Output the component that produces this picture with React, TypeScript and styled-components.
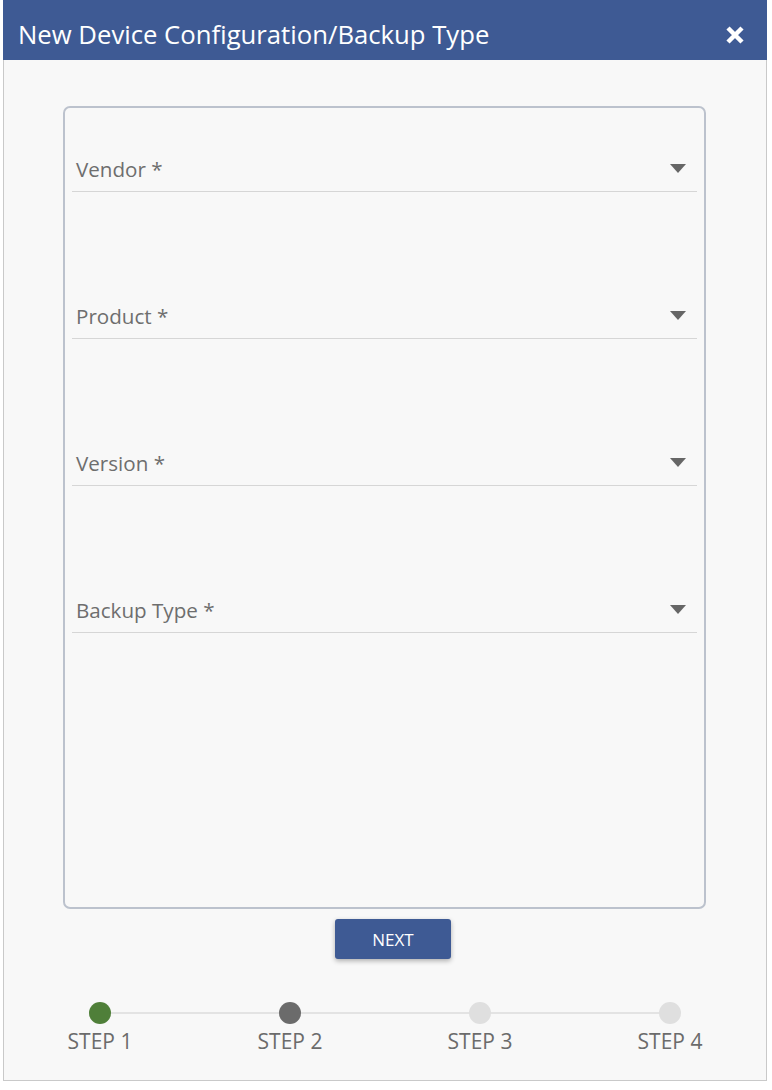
import React from 'react';
import styled, { createGlobalStyle } from 'styled-components';

const GlobalStyle = createGlobalStyle`
  body {
    margin: 0;
    background: #ffffff;
    font-family: 'Open Sans', 'Noto Sans', sans-serif;
  }
`;

const Page = styled.div`
  padding-left: 3px;
`;

const Dialog = styled.div`
  width: 764px;
  box-sizing: border-box;
  background: #f8f8f8;
  border: 1px solid #c9c9c9;
  border-top: none;
  display: flex;
  flex-direction: column;
`;

const Header = styled.header`
  height: 60px;
  box-sizing: border-box;
  margin: 0 -1px;
  padding: 9px 21px 0 15px;
  background: #3e5a94;
  display: flex;
  align-items: center;
  justify-content: space-between;
`;

const Title = styled.h1`
  margin: 0;
  font-size: 25.7px;
  font-weight: 400;
  line-height: 30px;
  color: #ffffff;
`;

const CloseButton = styled.button`
  border: none;
  background: none;
  padding: 0;
  width: 22px;
  height: 22px;
  display: flex;
  cursor: pointer;
`;

const Body = styled.div`
  padding: 46px 60px 0 59px;
  display: flex;
  flex-direction: column;
`;

const Card = styled.div`
  height: 803px;
  box-sizing: border-box;
  border: 2px solid #bcc2cd;
  border-radius: 7px;
  padding: 49px 7px 0;
  display: flex;
  flex-direction: column;
  gap: 112px;
`;

const Field = styled.div`
  display: flex;
  align-items: center;
  justify-content: space-between;
  padding: 0 11px 10px 4px;
  border-bottom: 1px solid #d6d6d6;
  cursor: pointer;
`;

const Label = styled.span`
  font-size: 20.6px;
  line-height: 24px;
  color: #6e6e6e;
`;

const Caret = styled.span`
  width: 0;
  height: 0;
  margin-top: -2px;
  border-left: 8px solid transparent;
  border-right: 8px solid transparent;
  border-top: 9px solid #666666;
`;

const ButtonRow = styled.div`
  display: flex;
  justify-content: center;
  padding: 10px 0 0 17px;
`;

const NextButton = styled.button`
  width: 116px;
  height: 40px;
  border: none;
  border-radius: 3px;
  background: #3e5a94;
  color: #ffffff;
  font-family: inherit;
  font-size: 17px;
  box-shadow: 0 2px 5px rgba(0, 0, 0, 0.3);
  cursor: pointer;
`;

const Stepper = styled.div`
  position: relative;
  margin: 43px 1px 0;
  padding-bottom: 27px;
  display: grid;
  grid-template-columns: repeat(4, 1fr);

  &::before {
    content: '';
    position: absolute;
    top: 10px;
    left: 12.5%;
    right: 12.5%;
    height: 2px;
    background: #e3e3e3;
  }
`;

const Step = styled.div`
  position: relative;
  display: flex;
  flex-direction: column;
  align-items: center;
  gap: 5px;
`;

const Dot = styled.span<{ $color: string }>`
  width: 22px;
  height: 22px;
  border-radius: 50%;
  background: ${(p) => p.$color};
`;

const StepLabel = styled.span`
  font-size: 21px;
  line-height: 24px;
  color: #6b6b6b;
`;

const fields = ['Vendor *', 'Product *', 'Version *', 'Backup Type *'];

const steps = [
  { label: 'STEP 1', color: '#4f7f39' },
  { label: 'STEP 2', color: '#6b6b6b' },
  { label: 'STEP 3', color: '#dfdfdf' },
  { label: 'STEP 4', color: '#dfdfdf' },
];

export default function App() {
  return (
    <Page>
      <GlobalStyle />
      <Dialog>
        <Header>
          <Title>New Device Configuration/Backup Type</Title>
          <CloseButton aria-label="close">
            <svg width="22" height="22" viewBox="0 0 22 22">
              <path d="M4 4 L18 18 M18 4 L4 18" stroke="#ffffff" strokeWidth="4.5" />
            </svg>
          </CloseButton>
        </Header>
        <Body>
          <Card>
            {fields.map((f) => (
              <Field key={f}>
                <Label>{f}</Label>
                <Caret />
              </Field>
            ))}
          </Card>
          <ButtonRow>
            <NextButton>NEXT</NextButton>
          </ButtonRow>
        </Body>
        <Stepper>
          {steps.map((s) => (
            <Step key={s.label}>
              <Dot $color={s.color} />
              <StepLabel>{s.label}</StepLabel>
            </Step>
          ))}
        </Stepper>
      </Dialog>
    </Page>
  );
}
